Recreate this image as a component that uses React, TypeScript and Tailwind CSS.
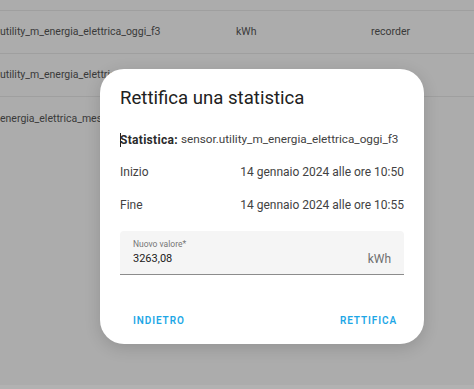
import React from "react";

const rows = [
  { name: "", unit: "", source: "" },
  { name: "utility_m_energia_elettrica_oggi_f3", unit: "kWh", source: "recorder" },
  { name: "utility_m_energia_elettrica_oggi_f2", unit: "", source: "" },
  { name: "energia_elettrica_mese_f3", unit: "", source: "" },
];

export default function App() {
  return (
    <div
      className="relative h-[389px] w-[474px] overflow-hidden bg-[#acacac]"
      style={{ fontFamily: "Roboto, 'Noto Sans', sans-serif" }}
    >
      {/* statistics table behind the scrim */}
      <div className="mt-[-32px] flex flex-col">
        {rows.map((row, i) => (
          <div
            key={i}
            className={`flex h-[43px] items-center text-[10.5px] text-[#3a3a3a] ${
              i < rows.length - 1 ? "border-b border-[#9f9f9f]" : ""
            }`}
          >
            <div className="w-[236px] shrink-0 overflow-hidden whitespace-nowrap">{row.name}</div>
            <div className="w-[135px] shrink-0">{row.unit}</div>
            <div className="flex-1">{row.source}</div>
          </div>
        ))}
      </div>

      {/* dialog */}
      <div className="absolute left-[100px] top-[69px] flex h-[275px] w-[324px] flex-col rounded-[24px] bg-white px-[20px] shadow-[0_4px_16px_rgba(0,0,0,0.15)]">
        <h2 className="mt-[17px] text-[18.6px] font-normal leading-[24px] text-[#212121]">
          Rettifica una statistica
        </h2>

        <div className="mt-[20px] flex h-[20px] items-center whitespace-nowrap text-[12px] text-[#424242]">
          <span className="mr-[-1px] inline-block h-[14px] w-[1px] bg-[#212121]" />
          <span className="font-bold tracking-[0.3px] text-[#2a2a2a]">Statistica:</span>
          <span className="ml-[3px] text-[11.75px]">sensor.utility_m_energia_elettrica_oggi_f3</span>
        </div>

        <div className="mt-[12px] flex h-[20px] items-center justify-between text-[12px] text-[#424242]">
          <span>Inizio</span>
          <span>14 gennaio 2024 alle ore 10:50</span>
        </div>

        <div className="mt-[13px] flex h-[20px] items-center justify-between text-[12px] text-[#424242]">
          <span>Fine</span>
          <span>14 gennaio 2024 alle ore 10:55</span>
        </div>

        <div className="mt-[16px] flex h-[44px] flex-col justify-center rounded-t-[4px] border-b border-[#8c8c8c] bg-[#f5f5f5] px-[13px] pt-[1px]">
          <span className="text-[8.5px] leading-[11px] text-[#757575]">Nuovo valore*</span>
          <div className="flex items-center justify-between leading-[18px]">
            <span className="text-[11px] text-[#212121]">3263,08</span>
            <span className="text-[12px] text-[#6f6f6f]">kWh</span>
          </div>
        </div>

        <div className="mt-[27px] flex items-center justify-between pl-[13px] pr-[7px] text-[10px] font-semibold tracking-[0.9px] text-[#1ea7e6]">
          <button type="button" className="h-[36px]">INDIETRO</button>
          <button type="button" className="h-[36px]">RETTIFICA</button>
        </div>
      </div>

      {/* bottom edge of the page */}
      <div className="absolute bottom-0 left-0 h-[4px] w-full bg-[#b2b2b2]" />
    </div>
  );
}
